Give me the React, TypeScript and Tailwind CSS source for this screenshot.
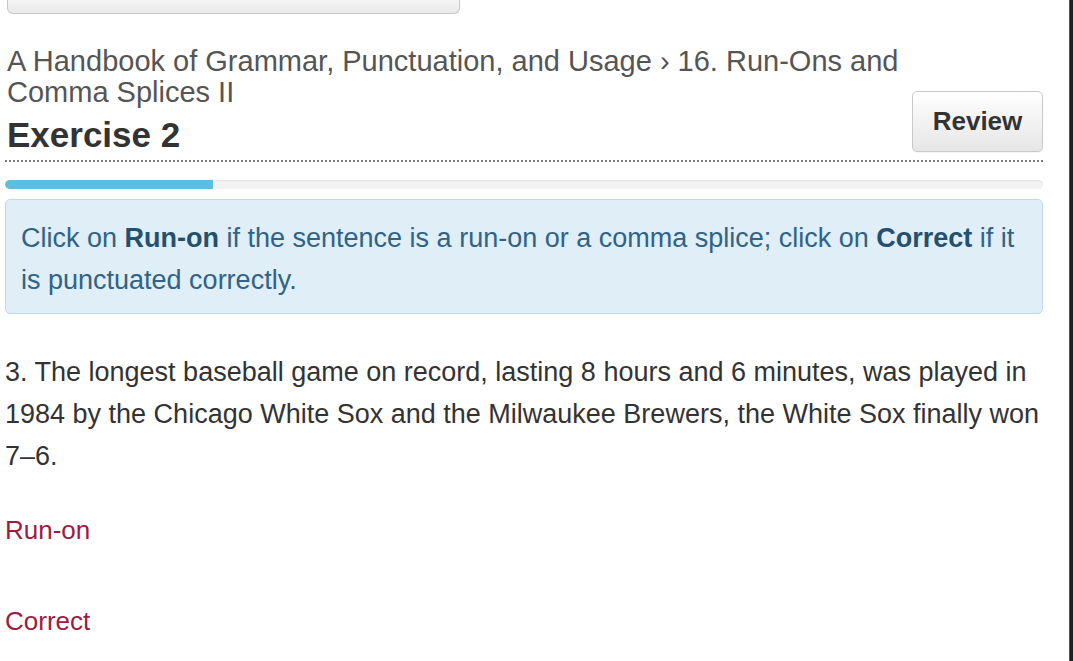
import React from "react";

export default function App() {
  const font = { fontFamily: '"Liberation Sans", Arial, Helvetica, sans-serif' };
  return (
    <div className="w-[1073px] h-[661px] bg-white overflow-hidden flex" style={font}>
      <div className="flex-1 flex flex-col pl-[5px] pr-[26px]">
        <div className="ml-[2px] w-[453px] h-[14px] border border-t-0 border-[#c8c8c8] rounded-b-[6px] bg-gradient-to-b from-[#f4f4f4] to-[#e9e9e9]" />

        <div className="mt-[32px] flex items-end justify-between">
          <div className="flex flex-col">
            <div className="ml-[2px] text-[29px] leading-[31px] text-[#555]">
              A Handbook of Grammar, Punctuation, and Usage › 16. Run-Ons and
              <br />
              Comma Splices II
            </div>
            <h1 className="mt-[7px] ml-[2px] text-[35px] leading-[40px] font-bold text-[#333]">Exercise 2</h1>
          </div>
          <button className="mb-[3px] w-[131px] h-[61px] rounded-[5px] border border-[#c9c9c9] bg-gradient-to-b from-[#ffffff] to-[#e6e6e6] text-[26px] font-bold text-[#333] shadow-[0_1px_1px_rgba(0,0,0,0.05)]">
            Review
          </button>
        </div>

        <div className="mt-[5px] border-t-2 border-dotted border-[#7a7a7a] h-0" />

        <div className="mt-[18px] h-[9px] w-full rounded-full bg-[#f3f3f3] overflow-hidden shadow-[inset_0_1px_2px_rgba(0,0,0,0.06)]">
          <div className="h-full w-[20%] bg-[#5bc0de] rounded-l-full" />
        </div>

        <div className="mt-[10px] rounded-[5px] border border-[#bcd7ee] bg-[#e0eef8] px-[15px] pt-[17px] pb-[12px] text-[27px] leading-[42px] text-[#2f6387]">
          Click on <b className="text-[#24506f]">Run-on</b> if the sentence is a run-on or a comma splice; click on{" "}
          <b className="text-[#24506f]">Correct</b> if it
          <br />
          is punctuated correctly.
        </div>

        <div className="mt-[37px] text-[27px] leading-[42px] text-[#333]">
          3. The longest baseball game on record, lasting 8 hours and 6 minutes, was played in
          <br />
          1984 by the Chicago White Sox and the Milwaukee Brewers, the White Sox finally won
          <br />
          7–6.
        </div>

        <div className="mt-[32px] text-[26px] leading-[42px] text-[#9e1b3f]">Run-on</div>
        <div className="mt-[49px] text-[26px] leading-[42px] text-[#9e1b3f]">Correct</div>
      </div>
      <div className="w-[4px] h-full bg-[#1b1f1f] border-l border-[#555]" />
    </div>
  );
}
